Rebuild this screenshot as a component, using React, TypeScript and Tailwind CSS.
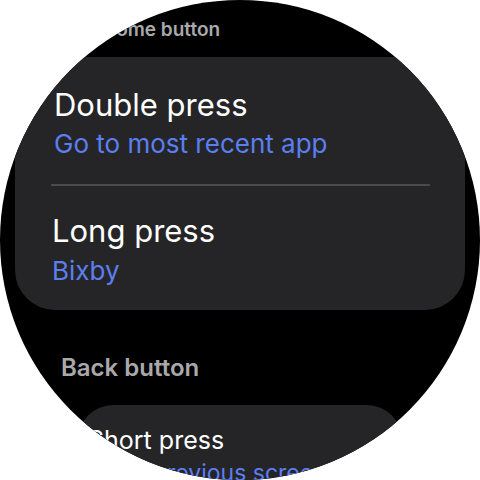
export default function App() {
  return (
    <div className="w-[480px] h-[480px] bg-white" style={{ fontFamily: 'Inter, Roboto, sans-serif' }}>
      <div className="w-[480px] h-[480px] rounded-full bg-black overflow-hidden flex flex-col">
        <div className="shrink-0 pl-[102px] pt-[18px] h-[57px] text-[19px] leading-[24px] font-semibold text-[#a9a9ab]">
          Home button
        </div>

        <div className="shrink-0 ml-[15px] w-[450px] h-[253px] rounded-[40px] bg-[#252527] flex flex-col">
          <div className="pl-[39px] pt-[30px]">
            <div className="text-[31px] leading-[36px] text-white">Double press</div>
            <div className="mt-[6px] text-[26px] leading-[30px] text-[#5b7ff0]">Go to most recent app</div>
          </div>
          <div className="ml-[36px] mr-[35px] mt-[25px] h-[2px] bg-[#4a4a4d]" />
          <div className="pl-[37px] pt-[27px]">
            <div className="text-[31px] leading-[36px] text-white">Long press</div>
            <div className="mt-[7px] text-[26px] leading-[30px] text-[#5b7ff0]">Bixby</div>
          </div>
        </div>

        <div className="shrink-0 pl-[61px] pt-[43px] text-[24px] leading-[30px] font-semibold text-[#a9a9ab]">
          Back button
        </div>

        <div className="shrink-0 ml-[78px] mt-[22px] w-[324px] h-[120px] rounded-[35px] bg-[#252527] pl-[10px] pt-[20px]">
          <div className="text-[25px] leading-[30px] text-white">Short press</div>
          <div className="mt-[4px] text-[23px] leading-[28px] text-[#5b7ff0]">Go to previous screen</div>
        </div>
      </div>
    </div>
  );
}
